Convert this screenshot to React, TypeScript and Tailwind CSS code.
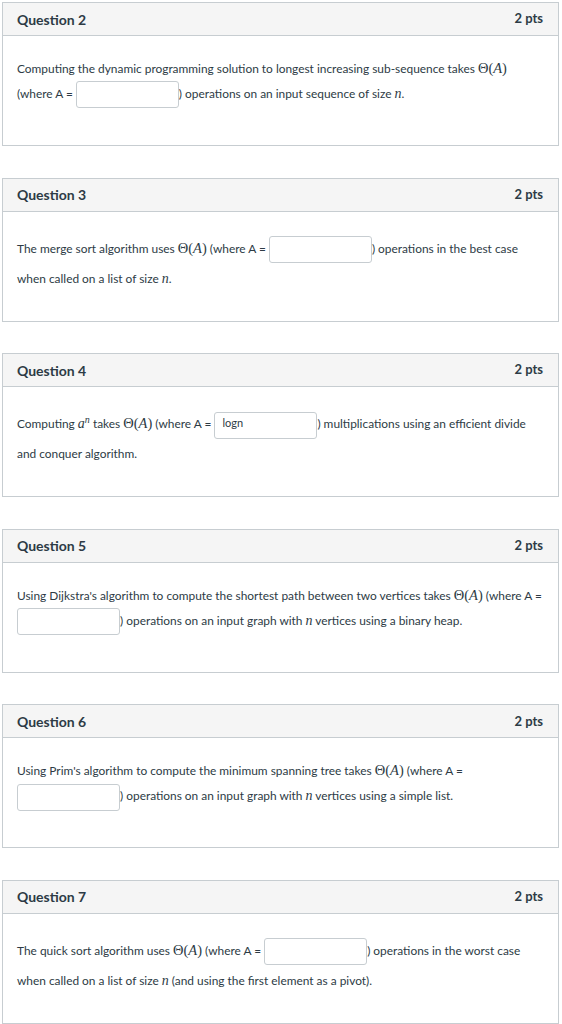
import React from 'react';

const Theta = () => (
  <span className="font-['Liberation_Serif',serif] text-[14.5px]">
    Θ(<i>A</i>)
  </span>
);

const N = () => <i className="font-['Liberation_Serif',serif] text-[14px]">n</i>;

const Blank = ({ value = '' }: { value?: string }) => (
  <span className="inline-block align-middle w-[103px] h-[27px] border border-[#c7cdd1] rounded-[3px] bg-white px-[7px] text-[11px] leading-[20px] text-[#2d3b45]">
    {value}
  </span>
);

const Line = ({ h, children }: { h: string; children: React.ReactNode }) => (
  <div className={`${h} whitespace-nowrap`}>{children}</div>
);

interface Q {
  num: number;
  inputFirst: boolean;
  line1: React.ReactNode;
  line2: React.ReactNode;
}

const questions: Q[] = [
  {
    num: 2,
    inputFirst: false,
    line1: (
      <>
        Computing the dynamic programming solution to longest increasing sub-sequence takes <Theta />
      </>
    ),
    line2: (
      <>
        (where A = <Blank />) operations on an input sequence of size <N />.
      </>
    ),
  },
  {
    num: 3,
    inputFirst: true,
    line1: (
      <>
        The merge sort algorithm uses <Theta /> (where A = <Blank />) operations in the best case
      </>
    ),
    line2: (
      <>
        when called on a list of size <N />.
      </>
    ),
  },
  {
    num: 4,
    inputFirst: true,
    line1: (
      <>
        Computing{' '}
        <span className="font-['Liberation_Serif',serif] text-[14px]">
          <i>a</i>
          <sup className="text-[10px]">
            <i>n</i>
          </sup>
        </span>{' '}
        takes <Theta /> (where A = <Blank value="logn" />) multiplications using an efficient divide
      </>
    ),
    line2: <>and conquer algorithm.</>,
  },
  {
    num: 5,
    inputFirst: false,
    line1: (
      <>
        Using Dijkstra's algorithm to compute the shortest path between two vertices takes <Theta /> (where A =
      </>
    ),
    line2: (
      <>
        <Blank />) operations on an input graph with <N /> vertices using a binary heap.
      </>
    ),
  },
  {
    num: 6,
    inputFirst: false,
    line1: (
      <>
        Using Prim's algorithm to compute the minimum spanning tree takes <Theta /> (where A =
      </>
    ),
    line2: (
      <>
        <Blank />) operations on an input graph with <N /> vertices using a simple list.
      </>
    ),
  },
  {
    num: 7,
    inputFirst: true,
    line1: (
      <>
        The quick sort algorithm uses <Theta /> (where A = <Blank />) operations in the worst case
      </>
    ),
    line2: (
      <>
        when called on a list of size <N /> (and using the first element as a pivot).
      </>
    ),
  },
];

const QuestionCard = ({ q }: { q: Q }) => (
  <div className="border border-[#c7cdd1] bg-white">
    <div className="h-[33px] bg-[#f5f5f5] border-b border-[#c7cdd1] flex items-center justify-between pl-[14px] pr-[15px]">
      <span className="text-[14px] font-bold text-[#2d3b45]">Question {q.num}</span>
      <span className="text-[13px] font-bold text-[#2d3b45]">2 pts</span>
    </div>
    <div className="h-[109px] px-[14px] text-[11.9px] text-[#2d3b45]">
      {q.inputFirst ? (
        <div className="pt-[23px]">
          <Line h="h-[27px] leading-[27px]">{q.line1}</Line>
          <div className="h-[5px]" />
          <Line h="h-[24px] leading-[24px]">{q.line2}</Line>
        </div>
      ) : (
        <div className="pt-[20px]">
          <Line h="h-[24px] leading-[24px]">{q.line1}</Line>
          <Line h="h-[27px] leading-[27px]">{q.line2}</Line>
        </div>
      )}
    </div>
  </div>
);

export default function App() {
  return (
    <div className="min-h-[1024px] bg-white font-['Lato',sans-serif] pt-[2px] pl-[2px] w-[562px]">
      <div className="w-[557px] flex flex-col gap-[31.6px]">
        {questions.map((q) => (
          <QuestionCard key={q.num} q={q} />
        ))}
      </div>
    </div>
  );
}
